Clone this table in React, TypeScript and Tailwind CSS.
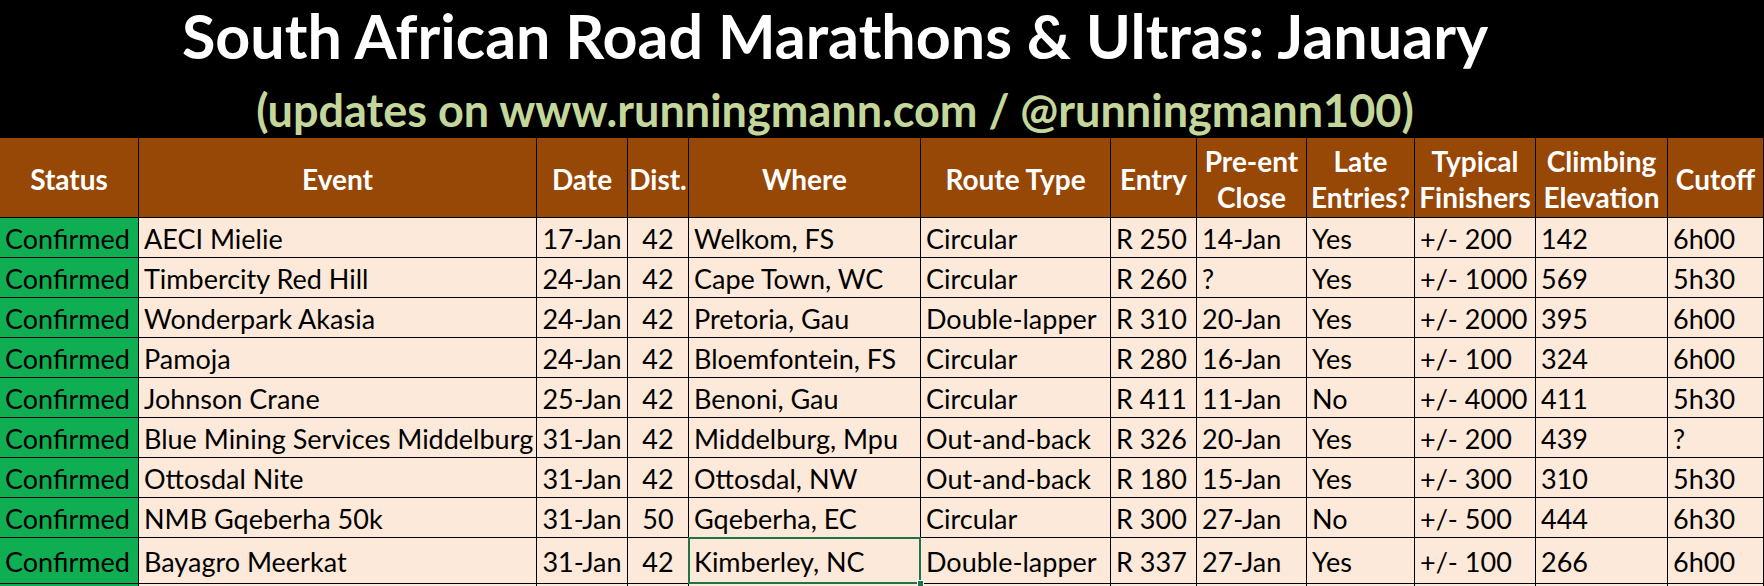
type Row = {
  status: string
  event: string
  date: string
  dist: string
  where: string
  route: string
  entry: string
  preClose: string
  late: string
  finishers: string
  climbing: string
  cutoff: string
}

const ROWS: Row[] = [
  { status: 'Confirmed', event: 'AECI Mielie', date: '17-Jan', dist: '42', where: 'Welkom, FS', route: 'Circular', entry: 'R 250', preClose: '14-Jan', late: 'Yes', finishers: '+/- 200', climbing: '142', cutoff: '6h00' },
  { status: 'Confirmed', event: 'Timbercity Red Hill', date: '24-Jan', dist: '42', where: 'Cape Town, WC', route: 'Circular', entry: 'R 260', preClose: '?', late: 'Yes', finishers: '+/- 1000', climbing: '569', cutoff: '5h30' },
  { status: 'Confirmed', event: 'Wonderpark Akasia', date: '24-Jan', dist: '42', where: 'Pretoria, Gau', route: 'Double-lapper', entry: 'R 310', preClose: '20-Jan', late: 'Yes', finishers: '+/- 2000', climbing: '395', cutoff: '6h00' },
  { status: 'Confirmed', event: 'Pamoja', date: '24-Jan', dist: '42', where: 'Bloemfontein, FS', route: 'Circular', entry: 'R 280', preClose: '16-Jan', late: 'Yes', finishers: '+/- 100', climbing: '324', cutoff: '6h00' },
  { status: 'Confirmed', event: 'Johnson Crane', date: '25-Jan', dist: '42', where: 'Benoni, Gau', route: 'Circular', entry: 'R 411', preClose: '11-Jan', late: 'No', finishers: '+/- 4000', climbing: '411', cutoff: '5h30' },
  { status: 'Confirmed', event: 'Blue Mining Services Middelburg', date: '31-Jan', dist: '42', where: 'Middelburg, Mpu', route: 'Out-and-back', entry: 'R 326', preClose: '20-Jan', late: 'Yes', finishers: '+/- 200', climbing: '439', cutoff: '?' },
  { status: 'Confirmed', event: 'Ottosdal Nite', date: '31-Jan', dist: '42', where: 'Ottosdal, NW', route: 'Out-and-back', entry: 'R 180', preClose: '15-Jan', late: 'Yes', finishers: '+/- 300', climbing: '310', cutoff: '5h30' },
  { status: 'Confirmed', event: 'NMB Gqeberha 50k', date: '31-Jan', dist: '50', where: 'Gqeberha, EC', route: 'Circular', entry: 'R 300', preClose: '27-Jan', late: 'No', finishers: '+/- 500', climbing: '444', cutoff: '6h30' },
  { status: 'Confirmed', event: 'Bayagro Meerkat', date: '31-Jan', dist: '42', where: 'Kimberley, NC', route: 'Double-lapper', entry: 'R 337', preClose: '27-Jan', late: 'Yes', finishers: '+/- 100', climbing: '266', cutoff: '6h00' },
]

// next row peeks in at the very bottom edge of the sheet
const NEXT_ROW: Row = {
  status: '', event: '', date: '', dist: '', where: '', route: '', entry: '', preClose: '', late: '', finishers: '', climbing: '', cutoff: '',
}

const HEADERS: string[][] = [
  ['Status'],
  ['Event'],
  ['Date'],
  ['Dist.'],
  ['Where'],
  ['Route Type'],
  ['Entry'],
  ['Pre-ent', 'Close'],
  ['Late', 'Entries?'],
  ['Typical', 'Finishers'],
  ['Climbing', 'Elevation'],
  ['Cutoff'],
]

const GRID =
  'grid grid-cols-[139px_398px_91px_61px_232px_190px_86px_110px_108px_121px_132px_96px]'

function Cell({
  children,
  center = false,
  green = false,
  className = '',
}: {
  children?: React.ReactNode
  center?: boolean
  green?: boolean
  className?: string
}) {
  return (
    <div
      className={`flex items-center overflow-hidden whitespace-nowrap border-r border-b border-black px-[5px] pt-[3px] ${
        green ? 'bg-[#10ae52]' : 'bg-[#fde9d9]'
      } ${center ? 'justify-center' : ''} ${className}`}
    >
      {children}
    </div>
  )
}

function DataRow({ row, selected, tall }: { row: Row; selected?: boolean; tall?: boolean }) {
  return (
    <div className={`${GRID} ${tall ? 'h-[46px]' : 'h-[40px]'}`}>
      <Cell green>{row.status}</Cell>
      <Cell>{row.event}</Cell>
      <Cell center>{row.date}</Cell>
      <Cell center>{row.dist}</Cell>
      <Cell className={selected ? 'relative overflow-visible' : ''}>
        {row.where}
        {selected && (
          <>
            <span className="pointer-events-none absolute -top-px -left-px -right-px -bottom-px z-10 border-2 border-[#217346]" />
            <span className="absolute -right-[4px] -bottom-[4px] z-10 h-[7px] w-[7px] border border-white bg-[#217346]" />
          </>
        )}
      </Cell>
      <Cell>{row.route}</Cell>
      <Cell>{row.entry}</Cell>
      <Cell>{row.preClose}</Cell>
      <Cell>{row.late}</Cell>
      <Cell>{row.finishers}</Cell>
      <Cell>{row.climbing}</Cell>
      <Cell>{row.cutoff}</Cell>
    </div>
  )
}

export default function App() {
  return (
    <div className="h-[586px] w-[1764px] overflow-hidden bg-black font-['Lato',sans-serif] text-[27px] text-black">
      <div className="h-[137px] pr-[94px] text-center font-bold">
        <div className="text-[61px] leading-[72px] text-white">
          South African Road Marathons &amp; Ultras: January
        </div>
        <div className="mt-[12px] text-[45px] leading-[53px] text-[#c4d79b]">
          (updates on www.runningmann.com / @runningmann100)
        </div>
      </div>

      <div className={`${GRID} h-[81px] border-t border-black`}>
        {HEADERS.map((lines) => (
          <div
            className="flex flex-col items-center justify-center whitespace-nowrap border-r border-b border-black bg-[#974706] pt-[2px] text-center text-[28px] font-bold leading-[36px] text-white"
            key={lines.join(' ')}
          >
            {lines.map((line) => (
              <span key={line}>{line}</span>
            ))}
          </div>
        ))}
      </div>

      {ROWS.map((row, index) => (
        <DataRow
          key={row.event}
          row={row}
          selected={index === ROWS.length - 1}
          tall={index === ROWS.length - 1}
        />
      ))}

      <DataRow row={NEXT_ROW} />
    </div>
  )
}
